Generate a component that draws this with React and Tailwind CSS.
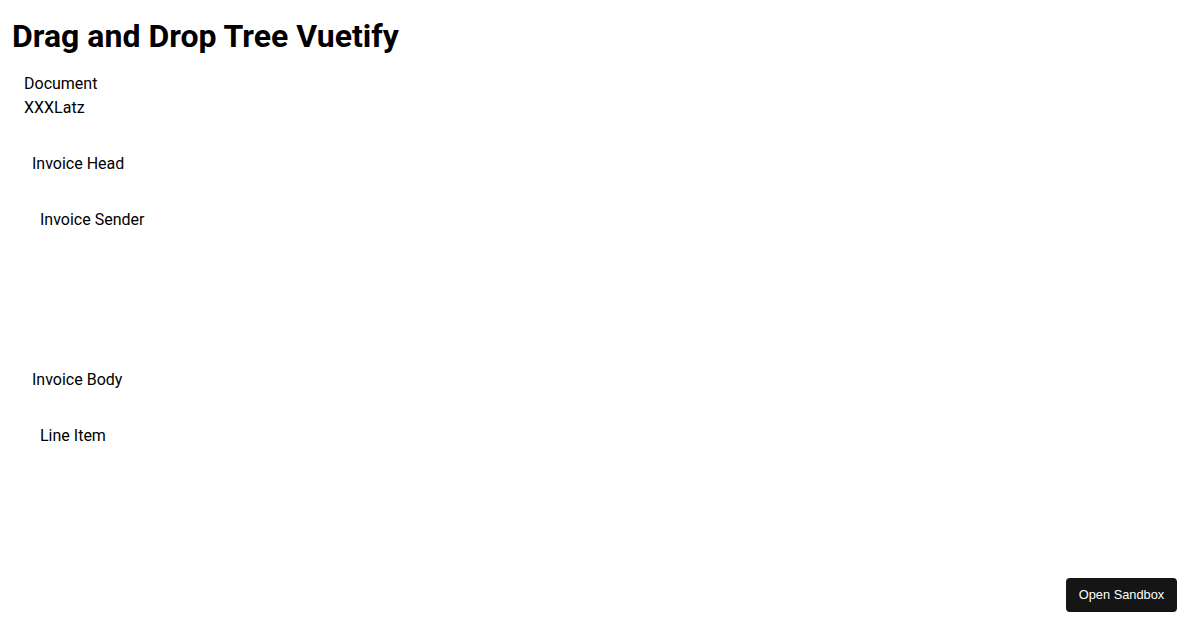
import React from "react";

function Node({ label, indent, className = "" }) {
  return (
    <div className={`text-[16px] leading-[24px] text-black ${indent} ${className}`}>
      {label}
    </div>
  );
}

export default function App() {
  return (
    <div className="min-h-[630px] bg-white font-['Roboto',sans-serif] text-black">
      <h1 className="pl-3 pt-[17px] text-[32px] font-bold leading-[38px]">
        Drag and Drop Tree Vuetify
      </h1>

      {/* tree */}
      <div className="mt-[17px] flex flex-col">
        <Node label="Document" indent="pl-6" />
        <Node label="XXXLatz" indent="pl-6" />
        <Node label="Invoice Head" indent="pl-8" className="mt-8" />
        <Node label="Invoice Sender" indent="pl-10" className="mt-8" />
        <Node label="Invoice Body" indent="pl-8" className="mt-[136px]" />
        <Node label="Line Item" indent="pl-10" className="mt-8" />
      </div>

      <button className="fixed right-[23px] bottom-[18px] h-[34px] w-[111px] rounded-[4px] bg-[#151515] font-['Liberation_Sans',Arial,sans-serif] text-[12.8px] text-white">
        Open Sandbox
      </button>
    </div>
  );
}
